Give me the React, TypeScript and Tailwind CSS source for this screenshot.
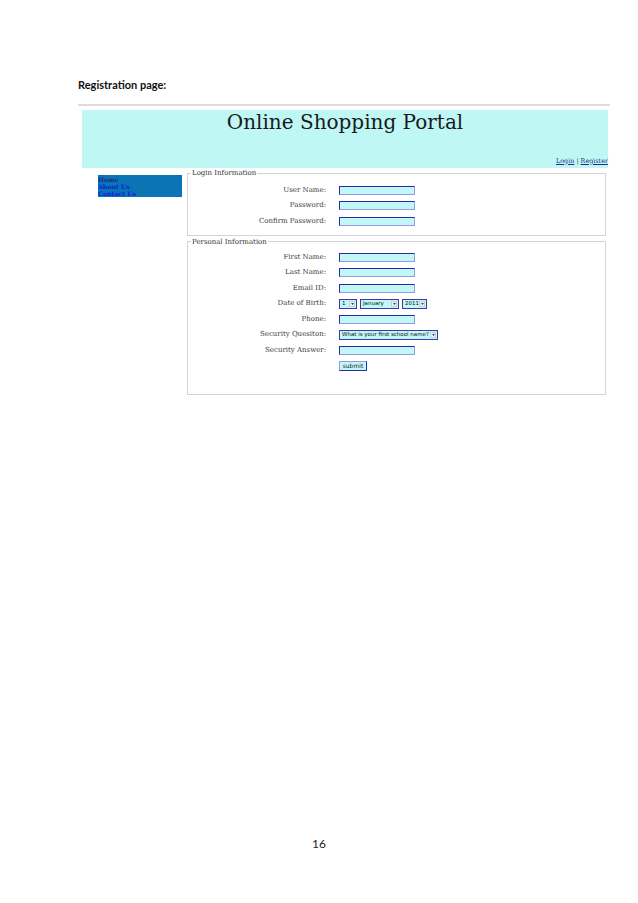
import React from "react";

const serif = { fontFamily: '"DejaVu Serif", "Liberation Serif", serif' };

function Input() {
  return (
    <div className="w-[76px] h-[9px] bg-[#c2f7f7] border border-t-[#2a2aa8] border-l-[#2a2aa8] border-b-[#9a9ae0] border-r-[#9a9ae0]" />
  );
}

function Select({ w, text }: { w: string; text: string }) {
  return (
    <div
      className={`${w} h-[10px] bg-[#c2f7f7] border border-[#3a3ab0] flex items-center justify-between pl-[2px] pr-[1px] whitespace-nowrap overflow-hidden`}
      style={{ fontFamily: '"DejaVu Sans", sans-serif' }}
    >
      <span className="text-[5.5px] leading-none text-[#111]">{text}</span>
      <span className="w-[6px] h-[6px] shrink-0 bg-[#e8f4f4] border border-[#c8d0d0] flex items-center justify-center">
        <svg width="3" height="2" viewBox="0 0 4 3">
          <path d="M0 0 L4 0 L2 3 Z" fill="#333" />
        </svg>
      </span>
    </div>
  );
}

function Row({ label, children }: { label: string; children: React.ReactNode }) {
  return (
    <div className="flex items-center h-[15.5px]">
      <div className="w-[138px] text-right text-[7px] leading-none text-[#3a3a3a]" style={serif}>
        {label}
      </div>
      <div className="ml-[13px] flex items-center">{children}</div>
    </div>
  );
}

export default function App() {
  return (
    <div className="w-[638px] h-[903px] bg-white relative overflow-hidden">
      <div className="pt-[77px] pl-[78px] h-[97px]">
        <div className="text-[11px] font-bold text-[#111] leading-[16px]" style={{ fontFamily: 'Lato, "Open Sans", sans-serif' }}>
          Registration page:
        </div>
      </div>
      <div className="ml-[78px] w-[532px] h-[2px] bg-[#dcdcdc] mt-[7px]" />
      <div className="ml-[82px] w-[526px] h-[58px] mt-[4px] bg-[#bff7f5] flex flex-col">
        <div className="text-center text-[20px] leading-[24px] text-[#1a1a1a] pt-[0px]" style={serif}>
          Online Shopping Portal
        </div>
        <div className="flex-1" />
        <div className="text-right text-[6.4px] leading-none pb-[4px] text-[#2a2a88]" style={serif}>
          <span className="underline">Login</span>
          <span className="text-[#444]"> | </span>
          <span className="underline">Register</span>
        </div>
      </div>
      <div className="flex">
        <div className="ml-[98px] mt-[7px] w-[84px] h-[22px] bg-[#0b74b4] flex flex-col pt-[0.5px] font-bold text-[6.2px] leading-[7.3px]" style={serif}>
          <span className="text-[#1c2a8c]">Home</span>
          <span className="text-[#0a20e0]">About Us</span>
          <span className="text-[#0a20e0]">Contact Us</span>
        </div>
        <div className="ml-[5px] w-[419px] flex flex-col gap-[1px]">
          <fieldset className="border border-[#d4d4d4] pt-[4.5px] pb-[5.5px]">
            <legend className="ml-[3px] px-[1px] text-[7px] leading-[10px] text-[#333]" style={serif}>
              Login Information
            </legend>
            <Row label="User Name:"><Input /></Row>
            <Row label="Password:"><Input /></Row>
            <Row label="Confirm Password:"><Input /></Row>
          </fieldset>
          <fieldset className="border border-[#d4d4d4] pt-[3px] pb-[20px]">
            <legend className="ml-[3px] px-[1px] text-[7px] leading-[10px] text-[#333]" style={serif}>
              Personal Information
            </legend>
            <Row label="First Name:"><Input /></Row>
            <Row label="Last Name:"><Input /></Row>
            <Row label="Email ID:"><Input /></Row>
            <Row label="Date of Birth:">
              <div className="flex gap-[3px]">
                <Select w="w-[18px]" text="1" />
                <Select w="w-[39px]" text="January" />
                <Select w="w-[25px]" text="2011" />
              </div>
            </Row>
            <Row label="Phone:"><Input /></Row>
            <Row label="Security Quesiton:">
              <Select w="w-[99px]" text="What is your first school name?" />
            </Row>
            <Row label="Security Answer:"><Input /></Row>
            <Row label="">
              <div
                className="w-[28px] h-[10px] bg-[#c2f7f7] border border-t-[#9a9ae0] border-l-[#9a9ae0] border-b-[#2a2aa8] border-r-[#2a2aa8] flex items-center justify-center text-[6px] leading-none text-[#222]"
                style={{ fontFamily: '"DejaVu Sans", sans-serif' }}
              >
                submit
              </div>
            </Row>
          </fieldset>
        </div>
      </div>
      <div className="absolute left-0 right-0 top-[836px] text-center text-[12px] leading-[16px] text-[#222]" style={{ fontFamily: 'Lato, "Open Sans", sans-serif' }}>
        16
      </div>
    </div>
  );
}
